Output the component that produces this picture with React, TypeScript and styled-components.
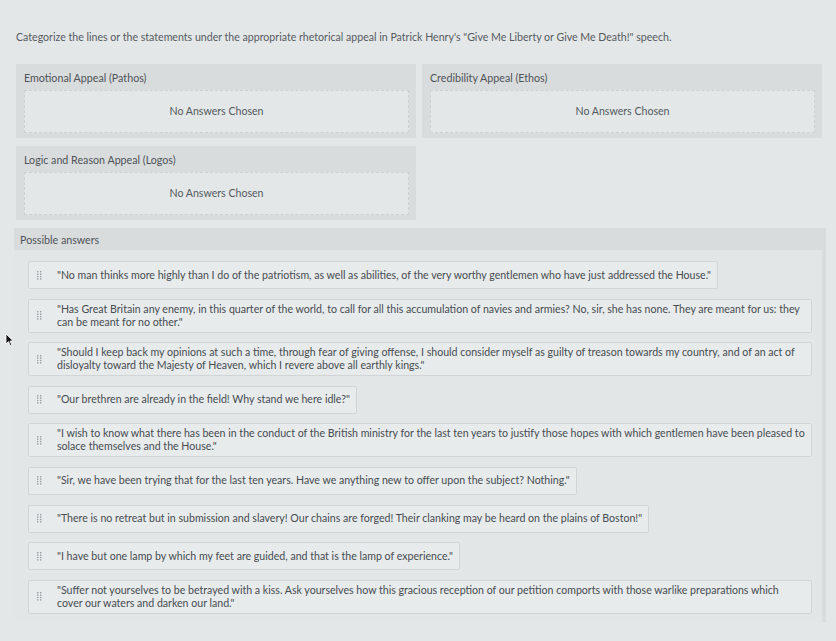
import React from "react";
import styled, { createGlobalStyle } from "styled-components";

const GlobalStyle = createGlobalStyle`
  html, body {
    margin: 0;
    padding: 0;
    background: #e4e7e8;
  }
  body {
    font-family: Lato, "Open Sans", "Liberation Sans", sans-serif;
    color: #4d5357;
  }
`;

const Page = styled.div`
  position: relative;
  width: 836px;
  height: 641px;
  box-sizing: border-box;
  padding: 31px 10px 0 14px;
  overflow: hidden;
`;

const Prompt = styled.div`
  font-size: 10.6px;
  line-height: 12px;
  margin-left: 2px;
  color: #555b5f;
`;

const CategoryGrid = styled.div`
  display: grid;
  grid-template-columns: 400px 400px;
  column-gap: 6px;
  row-gap: 8px;
  margin: 21px 0 0 2px;
`;

const Category = styled.div`
  background: #d9dcdd;
  padding: 8px 7px 5px 8px;
  display: flex;
  flex-direction: column;
  gap: 6px;
`;

const CategoryTitle = styled.div`
  font-size: 10.7px;
  line-height: 12px;
`;

const DropZone = styled.div`
  height: 43px;
  box-sizing: border-box;
  border: 1px dashed #cdd1d2;
  background: #e4e7e8;
  display: flex;
  align-items: center;
  justify-content: center;
  font-size: 10.6px;
  color: #535a5e;
  padding-bottom: 2px;
`;

const AnswersPanel = styled.div`
  margin-top: 8px;
  background: #d9dcdd;
  padding: 0 4px 0 0;
  display: flex;
  flex-direction: column;
  height: 394px;
  box-sizing: border-box;
`;

const PanelTitle = styled.div`
  font-size: 10.7px;
  line-height: 12px;
  padding: 6px 6px 4px;
`;

const AnswerList = styled.div`
  flex: 1;
  background: #e3e6e7;
  display: flex;
  flex-direction: column;
  align-items: flex-start;
  gap: 9.6px;
  padding: 11px 10px 0 14px;
`;

const Answer = styled.div`
  display: flex;
  align-items: center;
  gap: 15px;
  max-width: 100%;
  min-height: 28px;
  box-sizing: border-box;
  padding: 3px 6px 3px 8px;
  background: #e8ebec;
  border: 1px solid #d2d5d6;
  border-radius: 2px;
  font-size: 10.6px;
  line-height: 13px;
  color: #464c50;
`;

const AnswerText = styled.span`
  flex: 1;
`;

const Cursor = styled.svg`
  position: absolute;
  left: 5px;
  top: 333px;
`;

const Handle = () => (
  <svg width="5" height="9" viewBox="0 0 5 9" style={{ flexShrink: 0 }}>
    {[0, 1, 2, 3].map((r) =>
      [0, 1].map((c) => (
        <rect key={`${r}-${c}`} x={c * 3} y={r * 2.4} width="1.4" height="1.4" fill="#9a9fa2" />
      ))
    )}
  </svg>
);

const categories = [
  "Emotional Appeal (Pathos)",
  "Credibility Appeal (Ethos)",
  "Logic and Reason Appeal (Logos)",
];

const answers = [
  "\"No man thinks more highly than I do of the patriotism, as well as abilities, of the very worthy gentlemen who have just addressed the House.\"",
  "\"Has Great Britain any enemy, in this quarter of the world, to call for all this accumulation of navies and armies? No, sir, she has none. They are meant for us: they can be meant for no other.\"",
  "\"Should I keep back my opinions at such a time, through fear of giving offense, I should consider myself as guilty of treason towards my country, and of an act of disloyalty toward the Majesty of Heaven, which I revere above all earthly kings.\"",
  "\"Our brethren are already in the field! Why stand we here idle?\"",
  "\"I wish to know what there has been in the conduct of the British ministry for the last ten years to justify those hopes with which gentlemen have been pleased to solace themselves and the House.\"",
  "\"Sir, we have been trying that for the last ten years. Have we anything new to offer upon the subject? Nothing.\"",
  "\"There is no retreat but in submission and slavery! Our chains are forged! Their clanking may be heard on the plains of Boston!\"",
  "\"I have but one lamp by which my feet are guided, and that is the lamp of experience.\"",
  "\"Suffer not yourselves to be betrayed with a kiss. Ask yourselves how this gracious reception of our petition comports with those warlike preparations which cover our waters and darken our land.\"",
];

export default function App() {
  return (
    <>
      <GlobalStyle />
      <Page>
        <Prompt>
          Categorize the lines or the statements under the appropriate rhetorical appeal in Patrick
          Henry's "Give Me Liberty or Give Me Death!" speech.
        </Prompt>
        <CategoryGrid>
          {categories.map((c) => (
            <Category key={c}>
              <CategoryTitle>{c}</CategoryTitle>
              <DropZone>No Answers Chosen</DropZone>
            </Category>
          ))}
        </CategoryGrid>
        <AnswersPanel>
          <PanelTitle>Possible answers</PanelTitle>
          <AnswerList>
            {answers.map((a) => (
              <Answer key={a}>
                <Handle />
                <AnswerText>{a}</AnswerText>
              </Answer>
            ))}
          </AnswerList>
        </AnswersPanel>
        <Cursor width="9" height="14" viewBox="0 0 9 14">
          <path d="M1 1 L1 11 L3.5 8.6 L5.3 12.6 L6.8 12 L5 8 L8.2 8 Z" fill="#111" stroke="#fff" strokeWidth="0.8" />
        </Cursor>
      </Page>
    </>
  );
}
